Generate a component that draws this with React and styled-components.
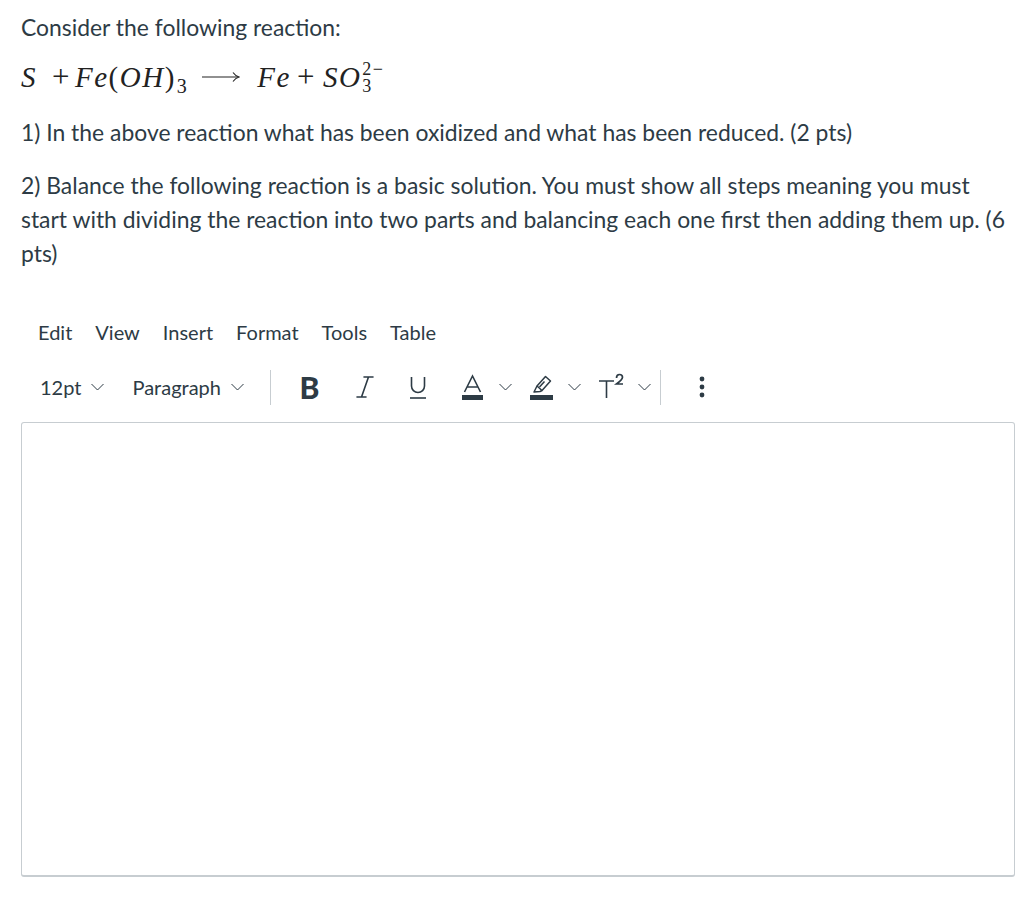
import React from 'react'
import styled, { createGlobalStyle } from 'styled-components'

const Global = createGlobalStyle`
  body {
    margin: 0;
    background: #fff;
    font-family: Lato, "Open Sans", sans-serif;
    color: #2d3b45;
  }
`

const Page = styled.div`
  padding: 10px 9px 0 21px;
  width: 1024px;
  box-sizing: border-box;
`

const Para = styled.p`
  margin: 0 0 ${p => p.gap ?? 19}px;
  font-size: 22.9px;
  line-height: 34px;
`

const Equation = styled.div`
  font-family: "Liberation Serif", "DejaVu Serif", serif;
  font-size: 29px;
  letter-spacing: 1.5px;
  height: 40px;
  line-height: 40px;
  margin: 0 0 18px;
  display: flex;
  align-items: baseline;
  color: #222;
  i { font-style: italic; }
`

const Op = styled.span`
  font-size: 31px;
  margin: 0 ${p => p.right}px 0 ${p => p.left}px;
`

const Sub = styled.span`
  font-size: 20px;
  position: relative;
  top: 6px;
  margin-left: 1px;
`

const Arrow = styled.span`
  margin: 0 ${p => p.right}px 0 ${p => p.left}px;
  display: inline-flex;
  align-self: center;
`

const Scripts = styled.span`
  display: inline-flex;
  flex-direction: column;
  font-size: 18px;
  line-height: 17px;
  align-self: center;
  margin: 2px 0 0 1px;
`

const MenuBar = styled.div`
  display: flex;
  gap: 23px;
  padding-left: 17px;
  height: 34px;
  align-items: center;
  margin-top: 45px;
`

const MenuItem = styled.span`
  font-size: 20px;
  color: #2d3b45;
`

const ToolBar = styled.div`
  display: flex;
  align-items: center;
  height: 38px;
  margin-top: 19px;
  padding-left: 19px;
`

const Select = styled.span`
  display: inline-flex;
  align-items: center;
  font-size: 20px;
  gap: 10px;
  margin-right: ${p => p.mr || 0}px;
`

const Sep = styled.span`
  width: 1px;
  height: 35px;
  background: #c7cdd1;
  margin-left: ${p => p.ml}px;
`

const Item = styled.span`
  display: inline-flex;
  align-items: center;
  margin-left: ${p => p.ml || 0}px;
  color: #2d3b45;
`

const BoldGlyph = styled.span`
  font-family: Lato, sans-serif;
  font-weight: 900;
  font-size: 30px;
  line-height: 30px;
  width: 21px;
  text-align: center;
  color: #2d3b45;
`

const Box = styled.div`
  margin-top: 16px;
  height: 455px;
  box-sizing: border-box;
  border: 1px solid #c7cdd1;
  border-bottom: 2px solid #c7cdd1;
  border-radius: 3px;
`

const Chevron = () => (
  <svg width="13" height="8" viewBox="0 0 13 8" fill="none" stroke="#2d3b45" strokeWidth="1">
    <path d="M0.5 1 L6.5 7 L12.5 1" />
  </svg>
)

const LongArrow = () => (
  <svg width="38" height="14" viewBox="0 0 38 14" fill="none" stroke="#222" strokeWidth="1.1">
    <path d="M0 7 H36.5" />
    <path d="M31 2.5 Q33.5 6 37 7 Q33.5 8 31 11.5" />
  </svg>
)

const Italic = () => (
  <svg width="18" height="26" viewBox="0 0 18 26" fill="none" stroke="#2d3b45" strokeWidth="1.6" strokeLinecap="round">
    <path d="M8 3 H17 M1 23 H10 M12.5 3 L5.5 23" />
  </svg>
)

const Underline = () => (
  <svg width="18" height="26" viewBox="0 0 18 26" fill="none" stroke="#2d3b45" strokeWidth="1.6">
    <path d="M2.5 3 V12 A6.5 6.5 0 0 0 15.5 12 V3" />
    <path d="M1 24 H17" />
  </svg>
)

const TextColor = () => (
  <svg width="21" height="28" viewBox="0 0 21 28" fill="none" stroke="#2d3b45" strokeWidth="1.6">
    <path d="M2.5 19 L10.5 3 L18.5 19 M5.5 14 H15.5" />
    <rect x="0" y="22" width="21" height="5" fill="#2d3b45" stroke="none" />
  </svg>
)

const Highlight = () => (
  <svg width="25" height="28" viewBox="0 0 25 28" fill="none" stroke="#2d3b45" strokeWidth="1.5" strokeLinejoin="round">
    <path d="M8 13 L16.5 3.5 L21.5 8 L13 17.5 Z" />
    <path d="M8 13 L5 19 L11 18.5 L13 17.5" />
    <path d="M10.5 14 L15.5 8.5" />
    <rect x="1" y="22" width="23" height="5" fill="#2d3b45" stroke="none" />
  </svg>
)

const Superscript = () => (
  <svg width="26" height="28" viewBox="0 0 26 28" fill="none" stroke="#2d3b45" strokeWidth="1.6">
    <path d="M1 8 H16 M8.5 8 V25" />
    <path d="M18.5 5 Q18.5 1.5 21.5 1.5 Q24.5 1.5 24.5 4.3 Q24.5 6.5 18.5 11 H25" strokeWidth="1.7" />
  </svg>
)

const More = () => (
  <svg width="6" height="26" viewBox="0 0 6 26" fill="#2d3b45">
    <circle cx="3" cy="5" r="2.4" />
    <circle cx="3" cy="13" r="2.4" />
    <circle cx="3" cy="21" r="2.4" />
  </svg>
)

export default function App() {
  return (
    <Page>
      <Global />
      <Para gap={13}>Consider the following reaction:</Para>
      <Equation>
        <i>S</i>
        <Op left={15} right={4}>+</Op>
        <i>Fe</i>(<i>OH</i>)<Sub>3</Sub>
        <Arrow left={14} right={17}><LongArrow /></Arrow>
        <i>Fe</i>
        <Op left={6} right={7}>+</Op>
        <i>SO</i>
        <Scripts><span>2−</span><span>3</span></Scripts>
      </Equation>
      <Para>1) In the above reaction what has been oxidized and what has been reduced. (2 pts)</Para>
      <Para gap={0}>
        2) Balance the following reaction is a basic solution. You must show all steps meaning you must
        start with dividing the reaction into two parts and balancing each one first then adding them up. (6 pts)
      </Para>
      <MenuBar>
        {['Edit', 'View', 'Insert', 'Format', 'Tools', 'Table'].map(m => (
          <MenuItem key={m}>{m}</MenuItem>
        ))}
      </MenuBar>
      <ToolBar>
        <Select mr={28}>12pt <Chevron /></Select>
        <Select>Paragraph <Chevron /></Select>
        <Sep ml={26} />
        <Item ml={28}><BoldGlyph>B</BoldGlyph></Item>
        <Item ml={36}><Italic /></Item>
        <Item ml={35}><Underline /></Item>
        <Item ml={35}><TextColor /></Item>
        <Item ml={16}><Chevron /></Item>
        <Item ml={17}><Highlight /></Item>
        <Item ml={14}><Chevron /></Item>
        <Item ml={17}><Superscript /></Item>
        <Item ml={14}><Chevron /></Item>
        <Sep ml={9} />
        <Item ml={38}><More /></Item>
      </ToolBar>
      <Box />
    </Page>
  )
}
